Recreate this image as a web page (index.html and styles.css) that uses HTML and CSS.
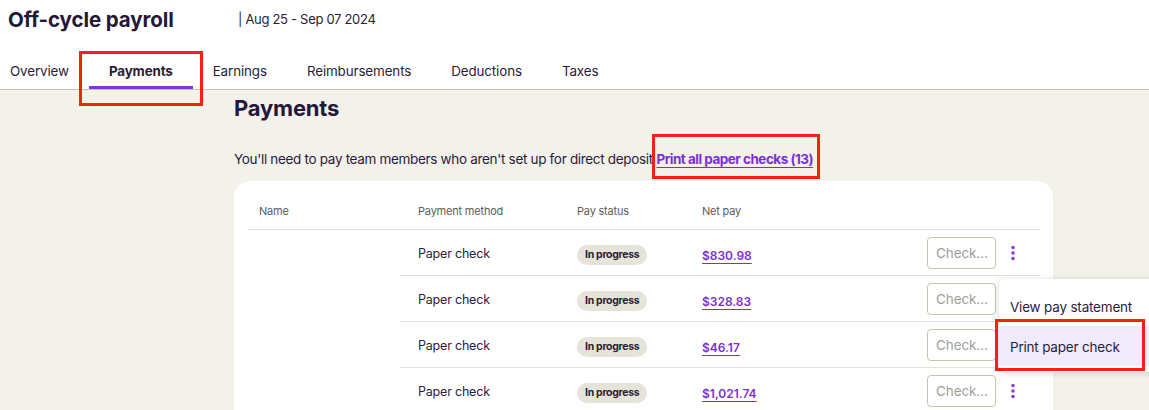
FILE: index.html
```html
<!DOCTYPE html>
<html>
<head>
<meta charset="utf-8">
<link rel="stylesheet" href="styles.css">
</head>
<body>
<header class="top">
  <div class="title-row">
    <h1 class="title">Off-cycle payroll</h1>
    <span class="dates">| Aug 25 - Sep 07 2024</span>
  </div>
  <nav class="tabs">
    <a class="tab">Overview</a>
    <a class="tab active">Payments</a>
    <a class="tab">Earnings</a>
    <a class="tab">Reimbursements</a>
    <a class="tab">Deductions</a>
    <a class="tab">Taxes</a>
  </nav>
</header>
<main class="main">
  <h2 class="heading">Payments</h2>
  <p class="note">You'll need to pay team members who aren't set up for direct deposit <a class="print-all">Print all paper checks (13)</a></p>
  <section class="card">
    <div class="thead">
      <div class="th th-name">Name</div>
      <div class="th">Payment method</div>
      <div class="th">Pay status</div>
      <div class="th">Net pay</div>
    </div>
    <div class="row">
      <div class="name"></div>
      <div class="cells">
        <div class="method">Paper check</div>
        <div class="status"><span class="badge">In progress</span></div>
        <div class="pay"><a class="amount">$830.98</a></div>
        <div class="check">Check...</div>
        <div class="kebab"><svg width="6" height="16" viewBox="0 0 6 16"><circle cx="3" cy="2.5" r="1.8"/><circle cx="3" cy="8" r="1.8"/><circle cx="3" cy="13.5" r="1.8"/></svg></div>
      </div>
    </div>
    <div class="row">
      <div class="name"></div>
      <div class="cells">
        <div class="method">Paper check</div>
        <div class="status"><span class="badge">In progress</span></div>
        <div class="pay"><a class="amount">$328.83</a></div>
        <div class="check">Check...</div>
        <div class="kebab"><svg width="6" height="16" viewBox="0 0 6 16"><circle cx="3" cy="2.5" r="1.8"/><circle cx="3" cy="8" r="1.8"/><circle cx="3" cy="13.5" r="1.8"/></svg></div>
      </div>
    </div>
    <div class="row">
      <div class="name"></div>
      <div class="cells">
        <div class="method">Paper check</div>
        <div class="status"><span class="badge">In progress</span></div>
        <div class="pay"><a class="amount">$46.17</a></div>
        <div class="check">Check...</div>
        <div class="kebab"><svg width="6" height="16" viewBox="0 0 6 16"><circle cx="3" cy="2.5" r="1.8"/><circle cx="3" cy="8" r="1.8"/><circle cx="3" cy="13.5" r="1.8"/></svg></div>
      </div>
    </div>
    <div class="row">
      <div class="name"></div>
      <div class="cells">
        <div class="method">Paper check</div>
        <div class="status"><span class="badge">In progress</span></div>
        <div class="pay"><a class="amount">$1,021.74</a></div>
        <div class="check">Check...</div>
        <div class="kebab"><svg width="6" height="16" viewBox="0 0 6 16"><circle cx="3" cy="2.5" r="1.8"/><circle cx="3" cy="8" r="1.8"/><circle cx="3" cy="13.5" r="1.8"/></svg></div>
      </div>
    </div>
  </section>
</main>

<div class="menu">
  <div class="menu-item">View pay statement</div>
  <div class="menu-item hl">Print paper check</div>
</div>

<div class="mark mark-tab"></div>
<div class="mark mark-link"></div>
<div class="mark mark-menu"></div>
</body>
</html>
```

FILE: styles.css
```css
* { box-sizing: border-box; }
html, body { margin: 0; padding: 0; }
body {
  font-family: Inter, "Noto Sans", sans-serif;
  color: #2a1c3c;
  background: #f2f1ea;
  width: 1149px;
  height: 410px;
  overflow: hidden;
  position: relative;
}
a { color: inherit; text-decoration: none; }

.top {
  background: #ffffff;
  border-bottom: 1px solid #c7c3a8;
}
.title-row {
  display: flex;
  align-items: center;
  height: 38px;
  padding-left: 8px;
}
.title {
  margin: 0;
  width: 230px;
  font-size: 20.5px;
  font-weight: 700;
  letter-spacing: -0.1px;
  color: #25173a;
}
.dates {
  font-size: 13px;
  color: #2a1c3c;
  letter-spacing: -0.3px;
}
.tabs {
  display: flex;
  margin-left: -10px;
  height: 51px;
  align-items: stretch;
}
.tab {
  display: flex;
  align-items: center;
  padding: 18px 20px 0;
  font-size: 13.4px;
  color: #2a1c3c;
  border-bottom: 3px solid transparent;
  letter-spacing: -0.12px;
}
.tab.active {
  font-weight: 700;
  border-bottom-color: #7b38d6;
  letter-spacing: -0.15px;
}

.main {
  padding: 4px 0 0 234px;
}
.heading {
  margin: 0;
  font-size: 22px;
  line-height: 28px;
  font-weight: 700;
  color: #25173a;
  letter-spacing: -0.2px;
}
.note {
  margin: 27px 0 0;
  font-size: 13.5px;
  line-height: 20px;
  letter-spacing: -0.32px;
  color: #2a1c3c;
}
.print-all {
  color: #7d2fd4;
  font-weight: 700;
  text-decoration: underline;
  text-underline-offset: 3px;
  letter-spacing: -0.5px;
}
.card {
  margin-top: 12px;
  width: 819px;
  height: 260px;
  background: #ffffff;
  border-radius: 16px 16px 0 0;
  padding: 11px 13px 0 14px;
}
.thead {
  display: grid;
  grid-template-columns: 170px 159px 125px 1fr;
  height: 38px;
  align-items: center;
  border-bottom: 1px solid #e3e1d8;
}
.th {
  font-size: 11px;
  color: #5f5b55;
  letter-spacing: -0.2px;
}
.th-name { padding-left: 11px; }

.row {
  display: flex;
  height: 46px;
}
.name { width: 152px; }
.cells {
  flex: 1;
  display: grid;
  grid-template-columns: 159px 125px 225px 80px 1fr;
  align-items: center;
  padding-left: 18px;
  padding-top: 2px;
  border-bottom: 1px solid #e3e1d8;
}
.method {
  font-size: 12.5px;
  color: #2a1c3c;
  letter-spacing: -0.2px;
}
.badge {
  display: inline-block;
  background: #e6e3d9;
  border-radius: 10px;
  height: 20px;
  line-height: 20px;
  padding: 0 8px;
  font-size: 10.5px;
  font-weight: 700;
  color: #2a2232;
  letter-spacing: -0.3px;
}
.amount {
  font-size: 12px;
  font-weight: 600;
  color: #7d2fd4;
  text-decoration: underline;
  text-underline-offset: 3px;
  letter-spacing: 0;
}
.check {
  width: 69px;
  height: 32px;
  border: 1px solid #c9c5aa;
  border-radius: 4px;
  font-size: 13.5px;
  line-height: 30px;
  padding-left: 8px;
  color: #a3a097;
  letter-spacing: -0.1px;
  margin-top: -2px;
}
.kebab {
  display: flex;
  align-items: center;
  padding-left: 3px;
  margin-top: -2px;
}
.kebab svg { fill: #8a3fe0; display: block; }

.menu {
  position: absolute;
  left: 999px;
  top: 279px;
  width: 170px;
  background: #ffffff;
  border-radius: 6px 0 0 6px;
  box-shadow: 0 1px 6px rgba(40, 30, 20, 0.18);
  padding: 7px 0 6px;
}
.menu-item {
  height: 40px;
  display: flex;
  align-items: center;
  padding: 2px 0 0 11px;
  font-size: 13.5px;
  color: #2a1c3c;
  letter-spacing: -0.2px;
}
.menu-item.hl { background: #efebfa; }

.mark {
  position: absolute;
  border: 3px solid #f4220f;
}
.mark-tab { left: 79px; top: 51px; width: 124px; height: 55px; }
.mark-link { left: 652px; top: 134px; width: 168px; height: 45px; }
.mark-menu { left: 995px; top: 319px; width: 150px; height: 52px; }
```
